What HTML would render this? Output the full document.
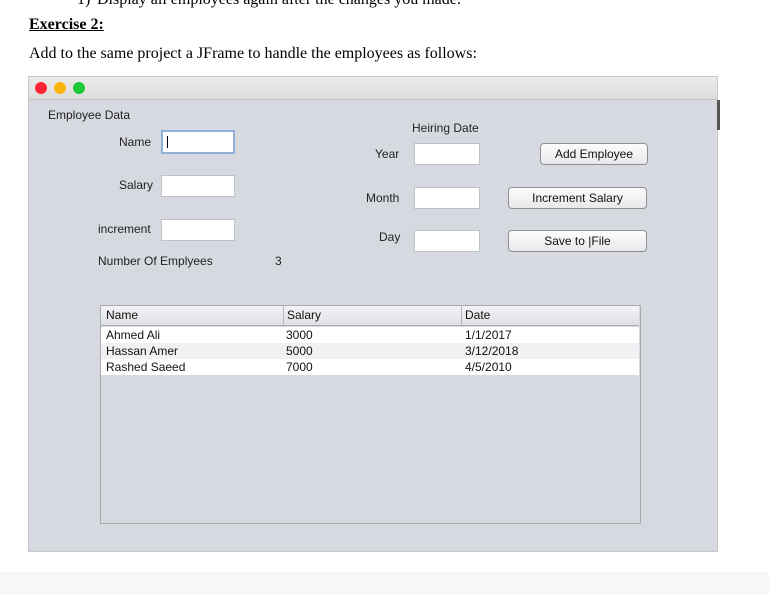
<!DOCTYPE html>
<html><head><style>
body{margin:0;width:769px;height:595px;background:#fff;position:relative;overflow:hidden;font-family:"Liberation Sans",sans-serif}
.a{position:absolute;white-space:nowrap}
.s{font-family:"Liberation Serif",serif;font-size:16px;color:#000}
.u{font-size:12px;color:#222}
.f{position:absolute;background:#fff;border:1px solid #bfc2c8;box-sizing:border-box}
.b{position:absolute;box-sizing:border-box;border:1px solid #8e9096;border-radius:4px;background:linear-gradient(#fdfdfd,#e9e9ec);font-size:12px;color:#111;text-align:center;line-height:20px}
.r{position:absolute;left:101px;width:538px;height:16px;font-size:12px;color:#111;line-height:16px}
.r span{position:absolute}
</style></head><body>
<div class="a s" style="left:77px;top:-9px">1)</div>
<div class="a s" style="left:97px;top:-9px">Display all employees again after the changes you made.</div>
<div class="a s" style="left:29px;top:16px;font-weight:bold;text-decoration:underline">Exercise 2:</div>
<div class="a s" style="left:29px;top:45px">Add to the same project a JFrame to handle the employees as follows:</div>
<div style="position:absolute;left:28px;top:76px;width:690px;height:476px;background:#d6d9e0;border:1px solid #c8c8c8;box-sizing:border-box"></div>
<div style="position:absolute;left:29px;top:77px;width:688px;height:22px;background:linear-gradient(#ececec,#dcdcdc);border-bottom:1px solid #c2c2c2"></div>
<div style="position:absolute;left:35px;top:82px;width:12px;height:12px;border-radius:50%;background:#fc2533"></div>
<div style="position:absolute;left:54px;top:82px;width:12px;height:12px;border-radius:50%;background:#fdb40d"></div>
<div style="position:absolute;left:73px;top:82px;width:12px;height:12px;border-radius:50%;background:#1bc939"></div>
<div style="position:absolute;left:717px;top:100px;width:3px;height:30px;background:#555"></div>
<div class="a u" style="left:48px;top:108px">Employee Data</div>
<div class="a u" style="left:119px;top:135px">Name</div>
<div class="f" style="left:161px;top:130px;width:74px;height:24px;border:2px solid #8fb1da"><div style="position:absolute;left:4px;top:4px;width:1px;height:12px;background:#000"></div></div>
<div class="a u" style="left:119px;top:178px">Salary</div>
<div class="f" style="left:161px;top:175px;width:74px;height:22px"></div>
<div class="a u" style="left:98px;top:222px">increment</div>
<div class="f" style="left:161px;top:219px;width:74px;height:22px"></div>
<div class="a u" style="left:98px;top:254px">Number Of Emplyees</div>
<div class="a u" style="left:275px;top:254px">3</div>
<div class="a u" style="left:412px;top:121px">Heiring Date</div>
<div class="a u" style="left:375px;top:147px">Year</div>
<div class="f" style="left:414px;top:143px;width:66px;height:22px"></div>
<div class="a u" style="left:366px;top:191px">Month</div>
<div class="f" style="left:414px;top:187px;width:66px;height:22px"></div>
<div class="a u" style="left:379px;top:230px">Day</div>
<div class="f" style="left:414px;top:230px;width:66px;height:22px"></div>
<div class="b" style="left:540px;top:143px;width:108px;height:22px">Add Employee</div>
<div class="b" style="left:508px;top:187px;width:139px;height:22px">Increment Salary</div>
<div class="b" style="left:508px;top:230px;width:139px;height:22px">Save to |File</div>
<div style="position:absolute;left:100px;top:305px;width:541px;height:219px;border:1px solid #a9abb0;box-sizing:border-box;background:#d6d9e0"></div>
<div class="r" style="top:306px;height:19px;line-height:19px;background:linear-gradient(#f4f4f6,#dfe0e4);border-bottom:1px solid #a9abb0"><span style="left:5px">Name</span><span style="left:182px;border-left:1px solid #b5b7bc;padding-left:3px;height:19px">Salary</span><span style="left:360px;border-left:1px solid #b5b7bc;padding-left:3px;height:19px">Date</span></div>
<div class="r" style="top:327px;background:#fff"><span style="left:5px">Ahmed Ali</span><span style="left:185px">3000</span><span style="left:364px">1/1/2017</span></div>
<div class="r" style="top:343px;background:#f1f1f3"><span style="left:5px">Hassan Amer</span><span style="left:185px">5000</span><span style="left:364px">3/12/2018</span></div>
<div class="r" style="top:359px;background:#fff"><span style="left:5px">Rashed Saeed</span><span style="left:185px">7000</span><span style="left:364px">4/5/2010</span></div>
<div style="position:absolute;left:0;top:572px;width:769px;height:23px;background:#f7f7f7"></div>
</body></html>
